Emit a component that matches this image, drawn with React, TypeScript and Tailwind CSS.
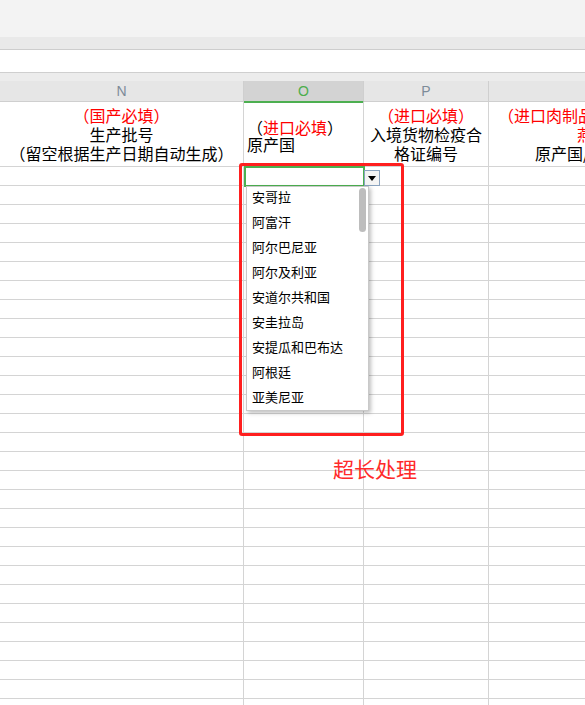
import React from "react";

const countries = ["安哥拉", "阿富汗", "阿尔巴尼亚", "阿尔及利亚", "安道尔共和国", "安圭拉岛", "安提瓜和巴布达", "阿根廷", "亚美尼亚"];

const font = { fontFamily: '"Noto Sans CJK SC", "Liberation Sans", sans-serif' };

export default function App() {
  const rows = Array.from({ length: 30 }, (_, i) => i);

  return (
    <div className="relative w-[585px] h-[705px] overflow-hidden bg-white" style={font}>
      {/* toolbar remnants */}
      <div className="h-[37px] bg-[#f3f3f3]" />
      <div className="h-[13px] bg-[#e9e9e9] border-b border-[#cdcdcd]" />
      <div className="h-[23px] bg-white border-b border-[#cfcfcf]" />

      {/* column letters */}
      <div className="h-[8px] bg-[#ececec]" />
      <div className="grid grid-cols-[244px_120px_125px_200px] h-[21px] bg-[#e6e6e6] border-b border-[#cfcfcf] text-[14px] leading-[20px]" style={{ fontFamily: '"Liberation Sans", sans-serif' }}>
        <div className="border-r border-[#cfcfcf] text-center text-[#7d8b99]">N</div>
        <div className="border-r border-[#cfcfcf] text-center text-[#4cae4c] bg-[#d3d3d3] border-b-2 border-b-[#4caf50]">O</div>
        <div className="border-r border-[#cfcfcf] text-center text-[#7d8b99]">P</div>
        <div />
      </div>

      {/* header row */}
      <div className="grid grid-cols-[244px_120px_125px_200px] h-[65px] border-b border-[#d4d4d4] text-[16px] leading-[19px] text-black">
        <div className="border-r border-[#d4d4d4] flex flex-col justify-center items-center whitespace-nowrap">
          <div className="text-[#ff0000]">（国产必填）</div>
          <div>生产批号</div>
          <div>（留空根据生产日期自动生成）</div>
        </div>
        <div className="border-r border-[#d4d4d4] flex flex-col justify-center pl-[3px] pt-[3px] leading-[17px] whitespace-nowrap">
          <div>
            （<span className="text-[#ff0000]">进口必填</span>）
          </div>
          <div>原产国</div>
        </div>
        <div className="border-r border-[#d4d4d4] flex flex-col justify-center items-center whitespace-nowrap">
          <div className="text-[#ff0000]">（进口必填）</div>
          <div>入境货物检疫合</div>
          <div>格证编号</div>
        </div>
        <div className="flex flex-col justify-center whitespace-nowrap overflow-hidden">
          <div className="text-[#ff0000] ml-[9px]">（进口肉制品、燕窝</div>
          <div className="text-[#ff0000] ml-[88px]">燕窝必填）</div>
          <div className="ml-[46px]">原产国/地区</div>
        </div>
      </div>

      {/* empty rows */}
      {rows.map((r) => (
        <div key={r} className="grid grid-cols-[244px_120px_125px_200px] h-[19px] border-b border-[#d4d4d4]">
          <div className="border-r border-[#d4d4d4]" />
          <div className="border-r border-[#d4d4d4]" />
          <div className="border-r border-[#d4d4d4]" />
          <div />
        </div>
      ))}

      {/* active cell */}
      <div className="absolute left-[244px] top-[166px] w-[121px] h-[21px] border-2 border-[#4caf50]" />

      {/* dropdown arrow */}
      <div className="absolute left-[364px] top-[170px] w-[16px] h-[16px] border border-[#8aa3bf] bg-[#f4f4f4] flex items-center justify-center">
        <svg width="8" height="5" viewBox="0 0 8 5">
          <path d="M0 0 H8 L4 5 Z" fill="#000" />
        </svg>
      </div>

      {/* list */}
      <div className="absolute left-[246px] top-[186px] w-[123px] h-[225px] bg-white border border-[#c9c9c9] shadow-[2px_2px_4px_rgba(0,0,0,0.25)] text-[13px] text-black overflow-hidden">
        <div className="flex flex-col -mt-[3px]">
          {countries.map((c) => (
            <div key={c} className="h-[25px] leading-[25px] pl-[5px] whitespace-nowrap">
              {c}
            </div>
          ))}
        </div>
        <div className="absolute right-[2px] top-[1px] w-[7px] h-[44px] rounded-full bg-[#bdbdbd]" />
      </div>

      {/* highlight */}
      <div className="absolute left-[239px] top-[163px] w-[165px] h-[273px] border-[3px] border-[#ff1f1f] rounded-[3px]" />
      <div className="absolute left-[333px] top-[454px] text-[21px] leading-[28px] text-[#ff2a2a]">超长处理</div>
    </div>
  );
}
